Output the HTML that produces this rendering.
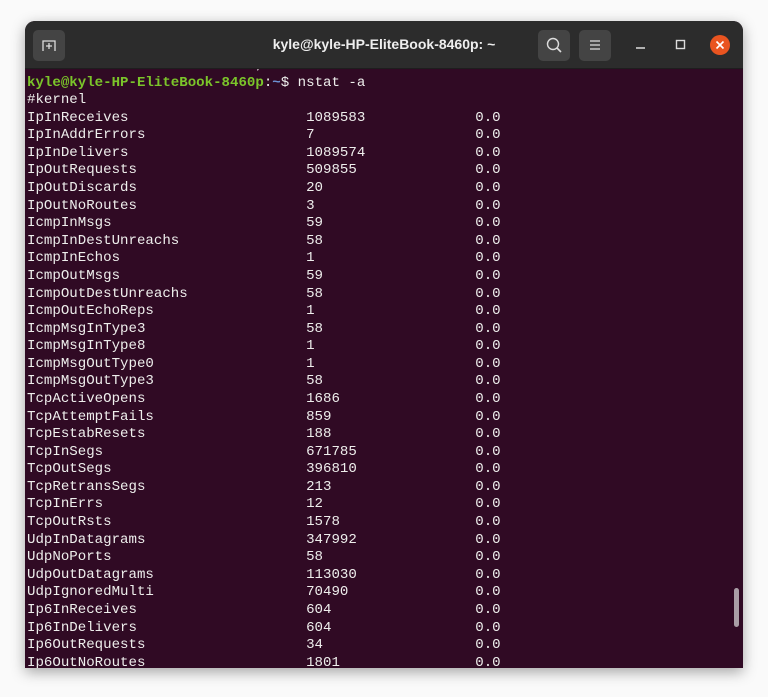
<!DOCTYPE html>
<html><head><style>
html,body{margin:0;width:768px;height:697px;background:#fafafa;overflow:hidden}
.win{position:absolute;left:25px;top:21px;width:718px;height:647px;border-radius:10px 10px 0 0;overflow:hidden;box-shadow:0 4px 14px rgba(0,0,0,.35);background:#300a24}
.hdr{position:absolute;left:0;top:0;width:718px;height:47px;background:#2c2c2c;z-index:2;border-bottom:1px solid #1e1e1e}
.btn{position:absolute;top:9px;width:32px;height:31px;background:#444;border-radius:5px}
.title{position:absolute;left:0;width:718px;top:15px;text-align:center;color:#eee;font:bold 14px "Liberation Sans",sans-serif}
pre{position:absolute;left:2px;top:36px;margin:0;font:14.1px/17.58px "Liberation Mono",monospace;color:#eeeeec}
.g{color:#7bc52a;font-weight:bold}.b{color:#6d93d6;font-weight:bold}
.sb{position:absolute;left:709px;top:567px;width:5px;height:39px;border-radius:3px;background:#a99ea6}
</style></head><body>
<div class="win">
<div class="hdr">
 <div class="btn" style="left:8px"><svg width="32" height="31"><path d="M10 21V11h12v10" fill="none" stroke="#ddd" stroke-width="1.3"/><path d="M16 13v6M13 16h6" stroke="#ddd" stroke-width="1.3"/></svg></div>
 <div class="title">kyle@kyle-HP-EliteBook-8460p: ~</div>
 <div class="btn" style="left:513px"><svg width="32" height="31"><circle cx="15" cy="14" r="5.5" fill="none" stroke="#ddd" stroke-width="1.4"/><path d="M19 18l4 4" stroke="#ddd" stroke-width="1.6"/></svg></div>
 <div class="btn" style="left:554px"><svg width="32" height="31"><path d="M11 11h10M11 15h10M11 19h10" stroke="#ddd" stroke-width="1.3"/></svg></div>
 <svg style="position:absolute;left:610px;top:20px" width="12" height="10"><path d="M1 7h9" stroke="#ddd" stroke-width="1.5"/></svg>
 <svg style="position:absolute;left:650px;top:18px" width="12" height="12"><rect x="1.5" y="1.5" width="8" height="8" fill="none" stroke="#ddd" stroke-width="1.4"/></svg>
 <svg style="position:absolute;left:684px;top:13px" width="22" height="22"><circle cx="11" cy="11" r="10" fill="#e95420"/><path d="M7.5 7.5l7 7M14.5 7.5l-7 7" stroke="#fff" stroke-width="1.6"/></svg>
</div>
<pre>  `              `  .      ,
<span class="g">kyle@kyle-HP-EliteBook-8460p</span>:<span class="b">~</span>$ nstat -a
#kernel
IpInReceives                     1089583             0.0
IpInAddrErrors                   7                   0.0
IpInDelivers                     1089574             0.0
IpOutRequests                    509855              0.0
IpOutDiscards                    20                  0.0
IpOutNoRoutes                    3                   0.0
IcmpInMsgs                       59                  0.0
IcmpInDestUnreachs               58                  0.0
IcmpInEchos                      1                   0.0
IcmpOutMsgs                      59                  0.0
IcmpOutDestUnreachs              58                  0.0
IcmpOutEchoReps                  1                   0.0
IcmpMsgInType3                   58                  0.0
IcmpMsgInType8                   1                   0.0
IcmpMsgOutType0                  1                   0.0
IcmpMsgOutType3                  58                  0.0
TcpActiveOpens                   1686                0.0
TcpAttemptFails                  859                 0.0
TcpEstabResets                   188                 0.0
TcpInSegs                        671785              0.0
TcpOutSegs                       396810              0.0
TcpRetransSegs                   213                 0.0
TcpInErrs                        12                  0.0
TcpOutRsts                       1578                0.0
UdpInDatagrams                   347992              0.0
UdpNoPorts                       58                  0.0
UdpOutDatagrams                  113030              0.0
UdpIgnoredMulti                  70490               0.0
Ip6InReceives                    604                 0.0
Ip6InDelivers                    604                 0.0
Ip6OutRequests                   34                  0.0
Ip6OutNoRoutes                   1801                0.0
</pre>
<div class="sb"></div>
</div>
</body></html>
